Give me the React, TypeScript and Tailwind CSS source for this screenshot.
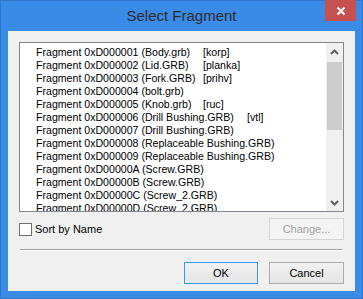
const rows: { text: string; tag?: string; tagAt?: string }[] = [
  { text: 'Fragment 0xD000001 (Body.grb)', tag: '[korp]', tagAt: 'w-[167px]' },
  { text: 'Fragment 0xD000002 (Lid.GRB)', tag: '[planka]', tagAt: 'w-[167px]' },
  { text: 'Fragment 0xD000003 (Fork.GRB)', tag: '[prihv]', tagAt: 'w-[167px]' },
  { text: 'Fragment 0xD000004 (bolt.grb)' },
  { text: 'Fragment 0xD000005 (Knob.grb)', tag: '[ruc]', tagAt: 'w-[167px]' },
  { text: 'Fragment 0xD000006 (Drill Bushing.GRB)', tag: '[vtl]', tagAt: 'w-[211px]' },
  { text: 'Fragment 0xD000007 (Drill Bushing.GRB)' },
  { text: 'Fragment 0xD000008 (Replaceable Bushing.GRB)' },
  { text: 'Fragment 0xD000009 (Replaceable Bushing.GRB)' },
  { text: 'Fragment 0xD00000A (Screw.GRB)' },
  { text: 'Fragment 0xD00000B (Screw.GRB)' },
  { text: 'Fragment 0xD00000C (Screw_2.GRB)' },
  { text: 'Fragment 0xD00000D (Screw_2.GRB)' },
]

function Chevron({ down }: { down?: boolean }) {
  return (
    <svg width="9" height="6" viewBox="0 0 9 6" className={down ? 'rotate-180' : ''}>
      <path d="M1 5 L4.5 1.5 L8 5" fill="none" stroke="#606060" strokeWidth="2" />
    </svg>
  )
}

export default function App() {
  return (
    <div className="w-[363px] h-[299px] bg-[#3a8be8] border border-[#2f76cc] flex flex-col font-['Liberation_Sans',Arial,sans-serif] text-[11px] text-black select-none">
      <div className="relative h-[30px] shrink-0 flex items-center justify-center">
        <span className="text-[15px] text-[#2b2b2b]">Select Fragment</span>
        <div className="absolute right-[6px] -top-[1px] w-[31px] h-[21px] bg-[#c75050] flex items-center justify-center">
          <svg width="10" height="10" viewBox="0 0 10 10">
            <path d="M1.5 1.5 L8.5 8.5 M8.5 1.5 L1.5 8.5" stroke="#fff" strokeWidth="2" />
          </svg>
        </div>
      </div>
      <div className="mx-[7px] mb-[7px] flex-1 bg-[#f0f0f0] px-[11px] pt-[11px] flex flex-col">
        <div className="h-[170px] border border-[#828790] bg-white flex">
          <div className="flex-1 pl-[16px] pt-[3px] overflow-hidden text-[10.6px]">
            {rows.map((r) => (
              <div key={r.text} className="h-[13px] leading-[13px] whitespace-nowrap flex">
                {r.tag ? (
                  <>
                    <span className={`${r.tagAt} shrink-0`}>{r.text}</span>
                    <span>{r.tag}</span>
                  </>
                ) : (
                  <span>{r.text}</span>
                )}
              </div>
            ))}
          </div>
          <div className="w-[17px] bg-[#f0f0f0] flex flex-col">
            <div className="h-[17px] flex items-center justify-center">
              <Chevron />
            </div>
            <div className="flex-1 px-[1px] pt-[2px]">
              <div className="h-[68px] bg-[#cdcdcd]" />
            </div>
            <div className="h-[17px] flex items-center justify-center">
              <Chevron down />
            </div>
          </div>
        </div>
        <div className="mt-[6px] flex items-center justify-between">
          <label className="flex items-center gap-[3px]">
            <span className="w-[13px] h-[13px] border border-[#707070] bg-white" />
            <span>Sort by Name</span>
          </label>
          <button className="w-[75px] h-[22px] border border-[#d5d5d5] bg-[#f4f4f4] text-[#a0a0a0]">
            Change...
          </button>
        </div>
        <div className="mt-[9px] ml-[1px] mr-[2px] h-px bg-[#a0a0a0] border-b border-white box-content" />
        <div className="mt-[11px] flex justify-end gap-[11px]">
          <button className="w-[74px] h-[22px] border border-[#3399ff] bg-gradient-to-b from-[#f2f2f2] to-[#e5e5e5] text-black">
            OK
          </button>
          <button className="w-[75px] h-[22px] border border-[#acacac] bg-gradient-to-b from-[#f2f2f2] to-[#e5e5e5] text-black">
            Cancel
          </button>
        </div>
      </div>
    </div>
  )
}
